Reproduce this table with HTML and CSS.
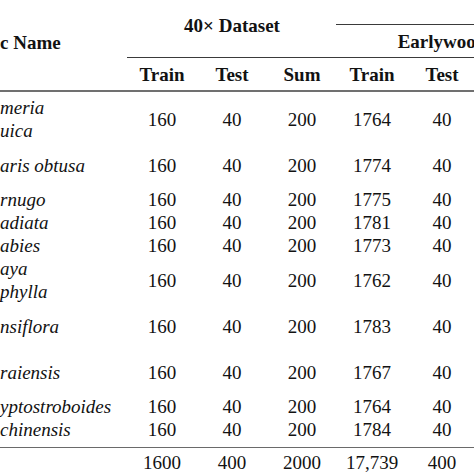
FILE: index.html
```html
<!DOCTYPE html>
<html lang="en">
<head>
<meta charset="utf-8">
<title>Dataset table</title>
<link rel="stylesheet" href="styles.css">
</head>
<body>
<div class="table">
  <div class="head">
    <div class="h-name">c Name</div>
    <div class="h-40">40× Dataset</div>
    <div class="rule-super"></div>
    <div class="h-early">Earlywood</div>
    <div class="rule-mid"></div>
    <div class="h-col c2">Train</div>
    <div class="h-col c3">Test</div>
    <div class="h-col c4">Sum</div>
    <div class="h-col c5">Train</div>
    <div class="h-col c6">Test</div>
  </div>
  <div class="rule-thick"></div>
  <div class="body">
    <div class="row"><div class="name">meria<br>uica</div><div>160</div><div>40</div><div>200</div><div>1764</div><div>40</div></div>
    <div class="row tall"><div class="name">aris obtusa</div><div>160</div><div>40</div><div>200</div><div>1774</div><div>40</div></div>
    <div class="row"><div class="name">rnugo</div><div>160</div><div>40</div><div>200</div><div>1775</div><div>40</div></div>
    <div class="row"><div class="name">adiata</div><div>160</div><div>40</div><div>200</div><div>1781</div><div>40</div></div>
    <div class="row"><div class="name">abies</div><div>160</div><div>40</div><div>200</div><div>1773</div><div>40</div></div>
    <div class="row"><div class="name">aya<br>phylla</div><div>160</div><div>40</div><div>200</div><div>1762</div><div>40</div></div>
    <div class="row tall"><div class="name">nsiflora</div><div>160</div><div>40</div><div>200</div><div>1783</div><div>40</div></div>
    <div class="row tall"><div class="name">raiensis</div><div>160</div><div>40</div><div>200</div><div>1767</div><div>40</div></div>
    <div class="row"><div class="name">yptostroboides</div><div>160</div><div>40</div><div>200</div><div>1764</div><div>40</div></div>
    <div class="row"><div class="name">chinensis</div><div>160</div><div>40</div><div>200</div><div>1784</div><div>40</div></div>
  </div>
  <div class="rule-bottom"></div>
  <div class="row total"><div class="name"></div><div>1600</div><div>400</div><div>2000</div><div>17,739</div><div>400</div></div>
</div>
</body>
</html>
```
FILE: styles.css
```css
html, body {
  margin: 0;
  padding: 0;
  background: #ffffff;
  overflow: hidden;
}
body {
  width: 474px;
  height: 474px;
  font-family: "Liberation Serif", "Times New Roman", serif;
  font-size: 19px;
  line-height: 23px;
  color: #121212;
}
.table {
  width: 547px;
}
.head {
  display: grid;
  grid-template-columns: 127px repeat(6, 70px);
  grid-template-rows: 24px 1px 32px 1px 32px;
  font-weight: bold;
}
.h-name {
  grid-column: 1;
  grid-row: 1 / 6;
  align-self: center;
  padding-bottom: 6px;
}
.h-40 {
  grid-column: 2 / 5;
  grid-row: 1 / 4;
  align-self: center;
  justify-self: center;
  padding-bottom: 7px;
}
.rule-super {
  grid-column: 5 / 8;
  grid-row: 2;
  margin-left: -1px;
  background: #3a3a3a;
}
.h-early {
  grid-column: 5 / 8;
  grid-row: 3;
  align-self: center;
  justify-self: center;
}
.rule-mid {
  grid-column: 2 / 8;
  grid-row: 4;
  background: #3a3a3a;
}
.h-col {
  grid-row: 5;
  align-self: center;
  justify-self: center;
}
.c2 { grid-column: 2; }
.c3 { grid-column: 3; }
.c4 { grid-column: 4; }
.c5 { grid-column: 5; }
.c6 { grid-column: 6; }
.rule-thick {
  height: 2px;
  background: #707070;
}
.body {
  padding-top: 4px;
}
.row {
  display: grid;
  grid-template-columns: 127px repeat(6, 70px);
  align-items: center;
  justify-items: center;
  min-height: 23px;
}
.row.tall {
  min-height: 46px;
}
.row .name {
  justify-self: start;
  font-style: italic;
}
.rule-bottom {
  margin-top: 6px;
  height: 1px;
  background: #6a6a6a;
}
.row.total {
  height: 28px;
}
```
